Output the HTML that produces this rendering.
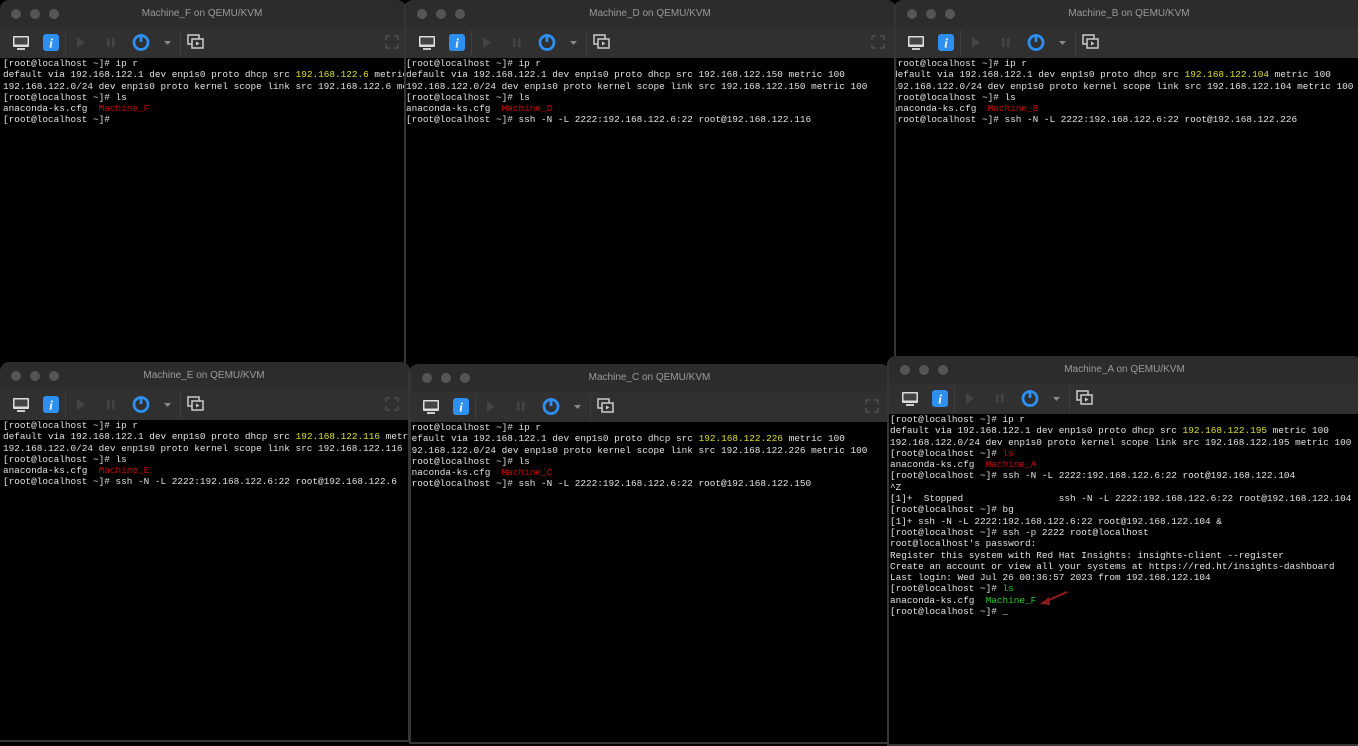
<!DOCTYPE html>
<html><head><meta charset="utf-8"><style>
*{box-sizing:border-box}
body{margin:0;width:1358px;height:736px;background:#000;overflow:hidden;position:relative;font-family:"Liberation Sans",sans-serif}
.win{position:absolute;background:#000;border:2px solid #353535;border-top:none;border-radius:9px 9px 0 0;overflow:hidden}
.tb{position:absolute;left:0;right:0;top:0;height:27px;background:#2c2c2c;color:#9a9a9a;font-size:10px;text-align:center;line-height:27px}
.dot{position:absolute;top:9px;width:10px;height:10px;border-radius:50%;background:#555}
.tool{position:absolute;left:0;right:0;top:27px;height:31px;background:#303030}
.tool svg{position:absolute;top:0}
.term{position:absolute;left:0;right:0;top:58px;bottom:0;background:#000;overflow:hidden}
pre{margin:0;position:absolute;top:0;font-family:"Liberation Mono",monospace;font-size:9.4px;line-height:11.3px;color:#e2e2e2;white-space:pre}
.y{color:#e0e020}.r{color:#d00000}.g{color:#1ed01e}
</style></head><body>

<!-- template toolbar svg reused -->
<div class="win" style="left:0;top:0;width:406px;height:740px;border-left:none">
<div class="tb"><span class="dot" style="left:11px"></span><span class="dot" style="left:30px"></span><span class="dot" style="left:49px"></span>Machine_F on QEMU/KVM</div>
<div class="tool"><svg width="406" height="31"><g id="tl">
<rect x="13" y="9" width="16" height="11" rx="1" fill="#ddd"/><rect x="14.5" y="10.5" width="13" height="7" fill="#444"/><rect x="17" y="21" width="8" height="2" fill="#ccc"/>
<rect x="43" y="7" width="16" height="17" rx="3" fill="#2d8ff0"/><text x="51" y="20.5" font-size="13" font-weight="bold" font-style="italic" fill="#fff" text-anchor="middle" font-family="Liberation Serif">i</text>
<line x1="65.5" y1="3" x2="65.5" y2="29" stroke="#3e3e3e"/>
<path d="M77 10 L85 15.5 L77 21Z" fill="#444"/>
<rect x="107" y="11" width="2.5" height="9" fill="#444"/><rect x="112" y="11" width="2.5" height="9" fill="#444"/>
<circle cx="141" cy="15.5" r="7" fill="none" stroke="#2d8ff0" stroke-width="2.8"/><line x1="141" y1="7" x2="141" y2="15" stroke="#2d8ff0" stroke-width="2.8"/>
<path d="M164 14 L171 14 L167.5 18Z" fill="#888"/>
<line x1="180.5" y1="3" x2="180.5" y2="29" stroke="#3e3e3e"/>
<rect x="188" y="8" width="11" height="9" fill="none" stroke="#ccc" stroke-width="1.5"/><rect x="192" y="12" width="11" height="9" fill="#303030" stroke="#ccc" stroke-width="1.5"/><path d="M196 14.5 L199.5 16.5 L196 18.5Z" fill="#ccc"/>
</g>
<g transform="translate(386,9)" stroke="#555" stroke-width="1.2" fill="none"><path d="M0 4V0H4M8 0H12V4M12 8V12H8M4 12H0V8"/></g></svg></div>
<div class="term"><pre style="left:3px">[root@localhost ~]# ip r
default via 192.168.122.1 dev enp1s0 proto dhcp src <span class="y">192.168.122.6</span> metric 100
192.168.122.0/24 dev enp1s0 proto kernel scope link src 192.168.122.6 metric 100
[root@localhost ~]# ls
anaconda-ks.cfg  <span class="r">Machine_F</span>
[root@localhost ~]#</pre></div></div>

<div class="win" style="left:404px;top:0;width:492px;height:740px">
<div class="tb"><span class="dot" style="left:11px"></span><span class="dot" style="left:30px"></span><span class="dot" style="left:49px"></span>Machine_D on QEMU/KVM</div>
<div class="tool"><svg width="492" height="31"><use href="#tl"/><g transform="translate(466,9)" stroke="#555" stroke-width="1.2" fill="none"><path d="M0 4V0H4M8 0H12V4M12 8V12H8M4 12H0V8"/></g></svg></div>
<div class="term"><pre style="left:0">[root@localhost ~]# ip r
default via 192.168.122.1 dev enp1s0 proto dhcp src 192.168.122.150 metric 100
192.168.122.0/24 dev enp1s0 proto kernel scope link src 192.168.122.150 metric 100
[root@localhost ~]# ls
anaconda-ks.cfg  <span class="r">Machine_D</span>
[root@localhost ~]# ssh -N -L 2222:192.168.122.6:22 root@192.168.122.116</pre></div></div>

<div class="win" style="left:894px;top:0;width:470px;height:740px">
<div class="tb"><span class="dot" style="left:11px"></span><span class="dot" style="left:30px"></span><span class="dot" style="left:49px"></span>Machine_B on QEMU/KVM</div>
<div class="tool"><svg width="470" height="31"><g transform="translate(-1,0)"><use href="#tl"/></g></svg></div>
<div class="term"><pre style="left:-4px">[root@localhost ~]# ip r
default via 192.168.122.1 dev enp1s0 proto dhcp src <span class="y">192.168.122.104</span> metric 100
192.168.122.0/24 dev enp1s0 proto kernel scope link src 192.168.122.104 metric 100
[root@localhost ~]# ls
anaconda-ks.cfg  <span class="r">Machine_B</span>
[root@localhost ~]# ssh -N -L 2222:192.168.122.6:22 root@192.168.122.226</pre></div></div>

<div class="win" style="left:0;top:362px;width:410px;height:380px;border-left:none">
<div class="tb"><span class="dot" style="left:11px"></span><span class="dot" style="left:30px"></span><span class="dot" style="left:49px"></span>Machine_E on QEMU/KVM</div>
<div class="tool"><svg width="410" height="31"><use href="#tl"/><g transform="translate(386,9)" stroke="#555" stroke-width="1.2" fill="none"><path d="M0 4V0H4M8 0H12V4M12 8V12H8M4 12H0V8"/></g></svg></div>
<div class="term"><pre style="left:3px">[root@localhost ~]# ip r
default via 192.168.122.1 dev enp1s0 proto dhcp src <span class="y">192.168.122.116</span> metric 100
192.168.122.0/24 dev enp1s0 proto kernel scope link src 192.168.122.116 metric 100
[root@localhost ~]# ls
anaconda-ks.cfg  <span class="r">Machine_E</span>
[root@localhost ~]# ssh -N -L 2222:192.168.122.6:22 root@192.168.122.6</pre></div></div>

<div class="win" style="left:409px;top:364px;width:481px;height:380px">
<div class="tb"><span class="dot" style="left:11px"></span><span class="dot" style="left:30px"></span><span class="dot" style="left:49px"></span>Machine_C on QEMU/KVM</div>
<div class="tool"><svg width="481" height="31"><g transform="translate(-1,0)"><use href="#tl"/></g><g transform="translate(455,9)" stroke="#555" stroke-width="1.2" fill="none"><path d="M0 4V0H4M8 0H12V4M12 8V12H8M4 12H0V8"/></g></svg></div>
<div class="term"><pre style="left:-5px">[root@localhost ~]# ip r
default via 192.168.122.1 dev enp1s0 proto dhcp src <span class="y">192.168.122.226</span> metric 100
192.168.122.0/24 dev enp1s0 proto kernel scope link src 192.168.122.226 metric 100
[root@localhost ~]# ls
anaconda-ks.cfg  <span class="r">Machine_C</span>
[root@localhost ~]# ssh -N -L 2222:192.168.122.6:22 root@192.168.122.150</pre></div></div>

<div class="win" style="left:887px;top:356px;width:475px;height:390px">
<div class="tb"><span class="dot" style="left:11px"></span><span class="dot" style="left:30px"></span><span class="dot" style="left:49px"></span>Machine_A on QEMU/KVM</div>
<div class="tool"><svg width="475" height="31"><use href="#tl"/></svg></div>
<div class="term"><pre style="left:1px">[root@localhost ~]# ip r
default via 192.168.122.1 dev enp1s0 proto dhcp src <span class="y">192.168.122.195</span> metric 100
192.168.122.0/24 dev enp1s0 proto kernel scope link src 192.168.122.195 metric 100
[root@localhost ~]# <span class="r">ls</span>
anaconda-ks.cfg  <span class="r">Machine_A</span>
[root@localhost ~]# ssh -N -L 2222:192.168.122.6:22 root@192.168.122.104
^Z
[1]+  Stopped                 ssh -N -L 2222:192.168.122.6:22 root@192.168.122.104
[root@localhost ~]# bg
[1]+ ssh -N -L 2222:192.168.122.6:22 root@192.168.122.104 &amp;
[root@localhost ~]# ssh -p 2222 root@localhost
root@localhost's password:
Register this system with Red Hat Insights: insights-client --register
Create an account or view all your systems at https://red.ht/insights-dashboard
Last login: Wed Jul 26 00:36:57 2023 from 192.168.122.104
[root@localhost ~]# <span class="g">ls</span>
anaconda-ks.cfg  <span class="g">Machine_F</span>
[root@localhost ~]# _</pre>
<svg style="position:absolute;left:150px;top:175px" width="35" height="20"><path d="M3 14 L28 3" stroke="#8b1a1a" stroke-width="2.2"/><path d="M1 15 L10 8 L11 16Z" fill="#8b1a1a"/></svg>
</div></div>
</body></html>
